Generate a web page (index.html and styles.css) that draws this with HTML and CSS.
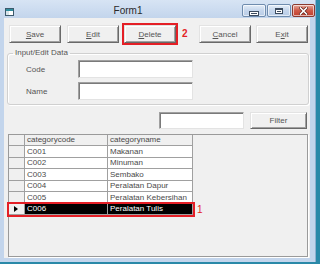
FILE: index.html
```html
<!DOCTYPE html>
<html>
<head>
<meta charset="utf-8">
<link rel="stylesheet" href="styles.css">
</head>
<body>
<div class="window">
  <div class="titlebar">
    <svg class="appicon" width="9" height="8" viewBox="0 0 9 8">
      <rect x="0.5" y="0.5" width="8" height="7" fill="#ffffff" stroke="#3d5a6c"/>
      <rect x="1" y="1" width="7" height="2" fill="#2f8d9e"/>
      <rect x="1" y="3" width="3" height="4" fill="#d8e4ea"/>
    </svg>
    <div class="title">Form1</div>
    <div class="caption">
      <div class="cbtn min"><span class="glyph-min"></span></div>
      <div class="cbtn max"><span class="glyph-max"></span></div>
      <div class="cbtn close">
        <svg width="9" height="8" viewBox="0 0 9 8">
          <path d="M1.5 1 L7.5 7 M7.5 1 L1.5 7" stroke="#5b1f18" stroke-width="3" stroke-linecap="square"/>
          <path d="M1.5 1 L7.5 7 M7.5 1 L1.5 7" stroke="#ffffff" stroke-width="1.6" stroke-linecap="square"/>
        </svg>
      </div>
    </div>
  </div>
  <div class="client">
    <div class="toolbar">
      <button class="btn btn-save"><u>S</u>ave</button>
      <button class="btn btn-edit"><u>E</u>dit</button>
      <button class="btn btn-delete"><u>D</u>elete</button>
      <span class="mark mark-2">2</span>
      <button class="btn btn-cancel"><u>C</u>ancel</button>
      <button class="btn btn-exit">E<u>x</u>it</button>
    </div>
    <fieldset class="group">
      <legend>Input/Edit Data</legend>
      <div class="field"><label>Code</label><input class="textbox field-input"></div>
      <div class="field field-second"><label>Name</label><input class="textbox field-input"></div>
    </fieldset>
    <div class="filter-row">
      <input class="textbox filter-input">
      <button class="btn btn-filter">Filter</button>
    </div>
    <div class="grid">
      <div class="row head h11">
        <div class="cell ind"></div>
        <div class="cell code">categorycode</div>
        <div class="cell name">categoryname</div>
      </div>
      <div class="row h12">
        <div class="cell ind"></div>
        <div class="cell code data">C001</div>
        <div class="cell name data">Makanan</div>
      </div>
      <div class="row h11">
        <div class="cell ind"></div>
        <div class="cell code data">C002</div>
        <div class="cell name data">Minuman</div>
      </div>
      <div class="row h12">
        <div class="cell ind"></div>
        <div class="cell code data">C003</div>
        <div class="cell name data">Sembako</div>
      </div>
      <div class="row h11">
        <div class="cell ind"></div>
        <div class="cell code data">C004</div>
        <div class="cell name data">Peralatan Dapur</div>
      </div>
      <div class="row h12">
        <div class="cell ind"></div>
        <div class="cell code data">C005</div>
        <div class="cell name data">Peralatan Kebersihan</div>
      </div>
      <div class="row h11 sel">
        <div class="cell ind"><span class="arrow"></span></div>
        <div class="cell code data">C006</div>
        <div class="cell name data">Peralatan Tulis</div>
        <span class="mark mark-1">1</span>
      </div>
    </div>
  </div>
</div>
</body>
</html>
```
FILE: styles.css
```css
* { box-sizing: border-box; }
html, body { margin: 0; padding: 0; }
body {
  width: 320px;
  height: 264px;
  overflow: hidden;
  background: #2a89a8;
  font-family: "Liberation Sans", Arial, sans-serif;
  font-size: 8px;
  color: #505050;
}
.window {
  width: 316px;
  height: 262px;
  background: #c3d5ec;
  display: flex;
  flex-direction: column;
  border-right: 1px solid #8fb0d0;
}
.titlebar {
  height: 18px;
  display: flex;
  align-items: flex-start;
  padding-left: 5px;
  background: linear-gradient(#d7e4f4, #c3d5ec);
}
.appicon { margin-top: 8px; flex: none; }
.title {
  flex: 1;
  text-align: center;
  font-size: 10px;
  line-height: 12px;
  margin-top: 5px;
  color: #2a2a2a;
}
.caption { display: flex; gap: 1px; margin-top: 4px; }
.cbtn {
  height: 13px;
  border: 1px solid #6f8cae;
  border-radius: 2px;
  display: flex;
  align-items: center;
  justify-content: center;
  box-shadow: inset 0 0 0 1px rgba(255,255,255,0.6);
}
.min, .max {
  width: 24px;
  background: linear-gradient(#e4edf8, #c5d6ec 50%, #b8cce6);
}
.close {
  width: 23px;
  border-color: #8a3a30;
  background: linear-gradient(#e6a99c, #cf5a48 50%, #c0402f);
}
.glyph-min {
  width: 8px;
  height: 3px;
  margin-top: 5px;
  background: #3b4a5e;
  border: 1px solid #ffffff;
  outline: 1px solid #3b4a5e;
}
.glyph-max {
  width: 8px;
  height: 6px;
  border: 1px solid #3b4a5e;
  border-top-width: 2px;
  background: #fff;
  box-shadow: inset 0 0 0 1px #fff, inset 0 0 0 2px #3b4a5e;
}
.client {
  margin: 0 5px 4px 4px;
  height: 240px;
  background: #f0f0f0;
  display: flex;
  flex-direction: column;
}
.toolbar {
  display: flex;
  align-items: center;
  height: 18px;
  margin-top: 7px;
  padding-left: 5px;
}
.btn {
  width: 52px;
  height: 18px;
  padding: 0;
  font-family: "Liberation Sans", Arial, sans-serif;
  font-size: 8px;
  color: #555;
  background: #f0f0f0;
  border: 1px solid;
  border-color: #e3e3e3 #696969 #696969 #e3e3e3;
  box-shadow: inset 1px 1px 0 #ffffff, inset -1px -1px 0 #a0a0a0;
}
.btn-edit { margin-left: 6px; }
.btn-delete {
  margin-left: 5px;
  outline: 2px solid #e41f26;
}
.mark {
  color: #e41f26;
  font-weight: bold;
  font-size: 10px;
  line-height: 10px;
}
.mark-2 { margin-left: 6px; width: 6px; }
.btn-cancel { margin-left: 11px; }
.btn-exit { margin-left: 5px; }
.group {
  margin: 5px 0 0 3px;
  width: 302px;
  padding: 2px 0 4px 0;
  border: 1px solid #d0d0d0;
  border-radius: 3px;
  box-shadow: inset 1px 1px 0 #ffffff, 1px 1px 0 #ffffff;
  min-width: 0;
}
.group legend {
  margin-left: 5px;
  padding: 0 2px;
  font-size: 8px;
  line-height: 10px;
  color: #555;
}
.field {
  display: flex;
  align-items: center;
  height: 18px;
  margin-left: 18px;
}
.field-second { margin-top: 4px; }
.field label { width: 52px; color: #555; }
.textbox {
  background: #ffffff;
  border: 1px solid;
  border-color: #a0a0a0 #e3e3e3 #e3e3e3 #a0a0a0;
  box-shadow: inset 1px 1px 0 #7a7a7a;
  padding: 0;
  margin: 0;
  font-size: 8px;
}
.field-input { width: 115px; height: 18px; }
.filter-row {
  display: flex;
  justify-content: flex-end;
  gap: 6px;
  height: 17px;
  margin-top: 7px;
  padding-right: 3px;
}
.filter-input { width: 85px; height: 17px; }
.btn-filter { width: 57px; height: 17px; }
.grid {
  margin: 5px 0 0 4px;
  width: 300px;
  height: 123px;
  background: #f0f0f0;
  border: 1px solid #9a9a9a;
  box-shadow: 1px 1px 0 #ffffff;
}
.row {
  display: flex;
  width: 184px;
  position: relative;
}
.h11 { height: 11px; }
.h12 { height: 12px; }
.cell {
  border-right: 1px solid #a0a0a0;
  border-bottom: 1px solid #a0a0a0;
  display: flex;
  align-items: center;
  padding-left: 2px;
  white-space: nowrap;
  overflow: hidden;
  line-height: 10px;
}
.ind { width: 16px; background: #f0f0f0; padding-left: 0; }
.code { width: 83px; }
.name { width: 85px; }
.data { background: #ffffff; color: #4a4a4a; }
.head .cell { background: #f0f0f0; color: #4a4a4a; }
.sel { outline: 2px solid #e41f26; }
.sel .data { background: #000000; color: #ffffff; }
.arrow {
  margin-left: 5px;
  width: 0;
  height: 0;
  border-left: 4px solid #000;
  border-top: 3.5px solid transparent;
  border-bottom: 3.5px solid transparent;
}
.mark-1 {
  position: absolute;
  left: calc(100% + 4px);
  top: 1px;
  font-weight: normal;
}
```
